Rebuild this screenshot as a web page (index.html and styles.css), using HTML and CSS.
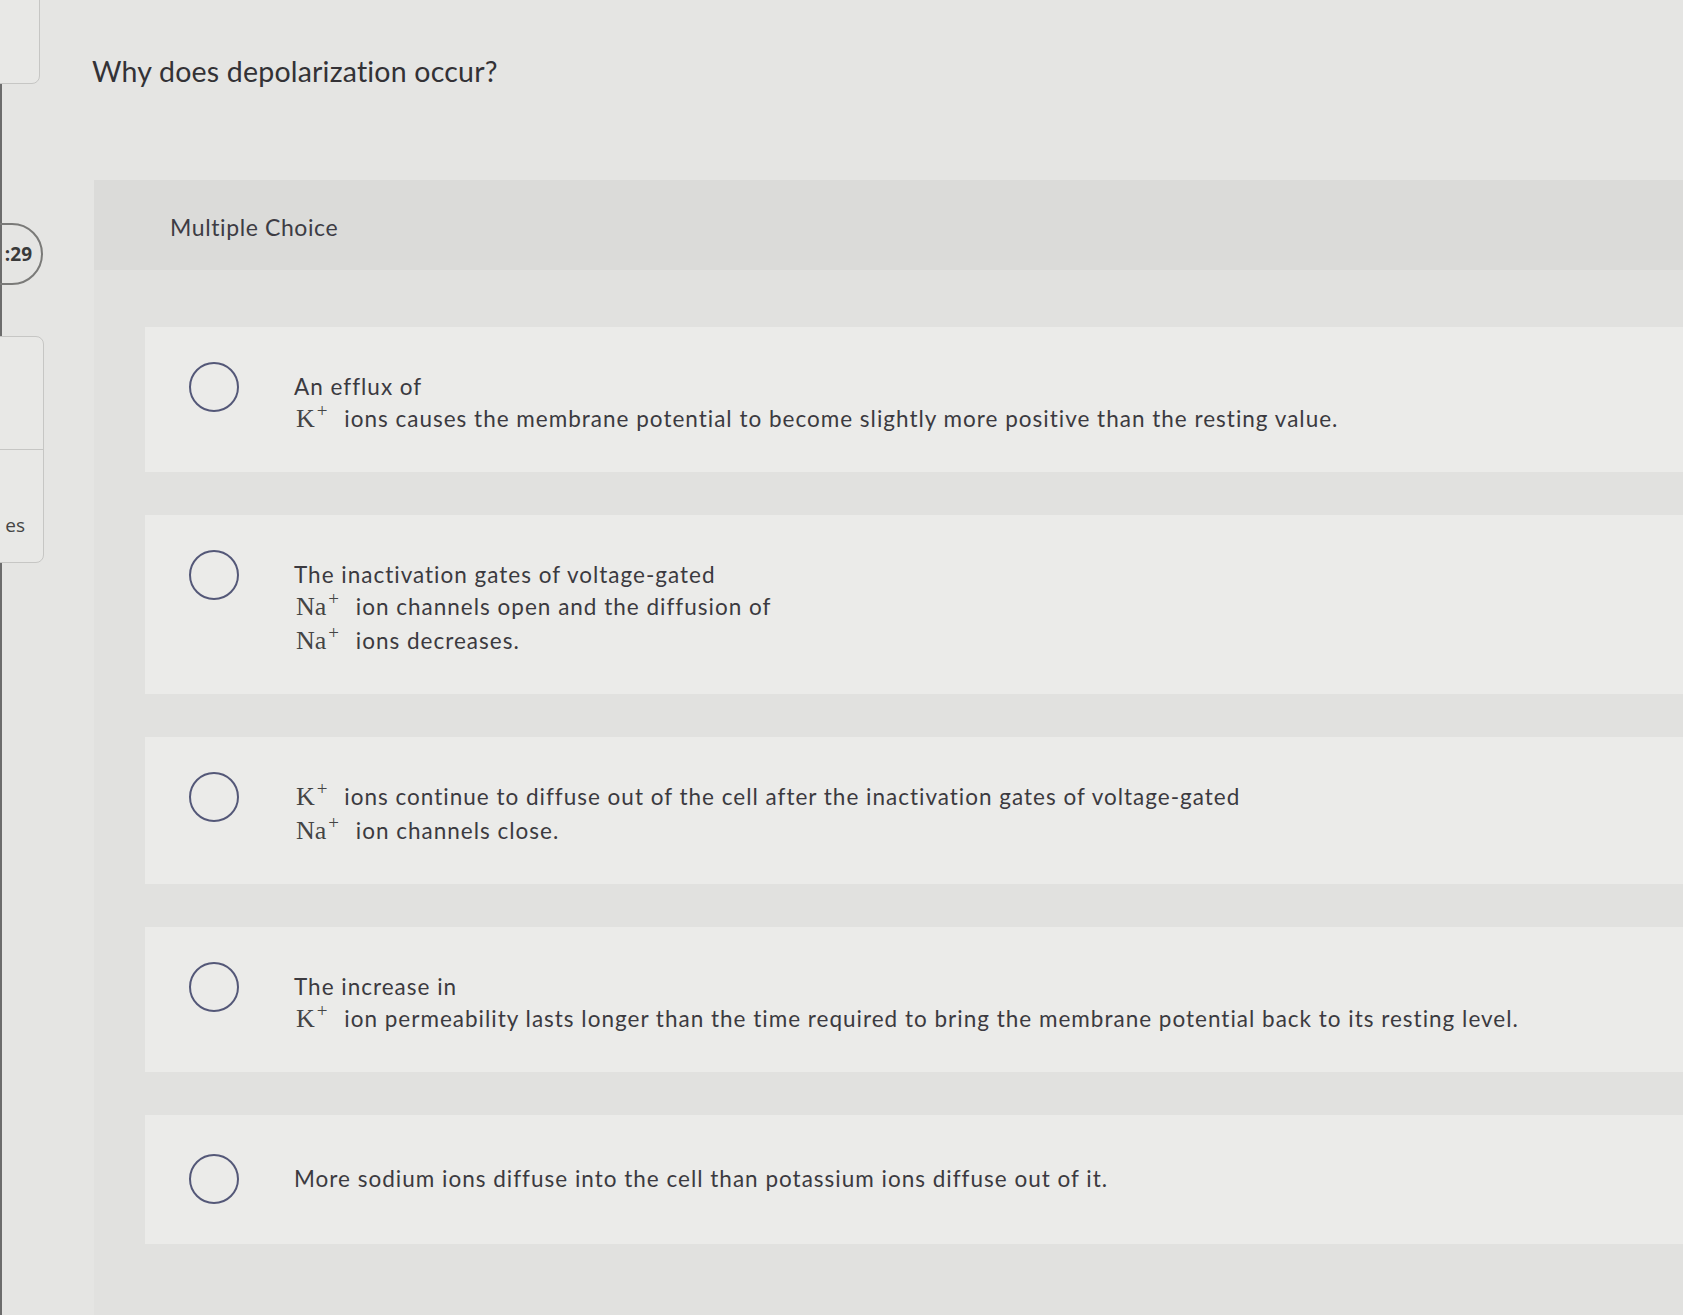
FILE: index.html
```html
<!DOCTYPE html>
<html lang="en">
<head>
<meta charset="utf-8">
<title>Why does depolarization occur?</title>
<link rel="stylesheet" href="styles.css">
</head>
<body>
<div class="page">
  <aside class="sidebar">
    <div class="side-box side-top"></div>
    <div class="timer">:29</div>
    <div class="side-box side-list">
      <div class="side-cell"></div>
      <div class="side-cell side-cell-last">es</div>
    </div>
  </aside>
  <main class="main">
    <h1 class="question">Why does depolarization occur?</h1>
    <section class="panel">
      <div class="panel-head">Multiple Choice</div>
      <div class="choices">
        <div class="choice">
          <span class="radio"></span>
          <div class="choice-text">An efflux of<br><span class="math">K<sup>+</sup></span> ions causes the membrane potential to become slightly more positive than the resting value.</div>
        </div>
        <div class="choice">
          <span class="radio"></span>
          <div class="choice-text">The inactivation gates of voltage-gated<br><span class="math">Na<sup>+</sup></span> ion channels open and the diffusion of<br><span class="math">Na<sup>+</sup></span> ions decreases.</div>
        </div>
        <div class="choice">
          <span class="radio"></span>
          <div class="choice-text"><span class="math">K<sup>+</sup></span> ions continue to diffuse out of the cell after the inactivation gates of voltage-gated<br><span class="math">Na<sup>+</sup></span> ion channels close.</div>
        </div>
        <div class="choice">
          <span class="radio"></span>
          <div class="choice-text">The increase in<br><span class="math">K<sup>+</sup></span> ion permeability lasts longer than the time required to bring the membrane potential back to its resting level.</div>
        </div>
        <div class="choice choice-single">
          <span class="radio"></span>
          <div class="choice-text">More sodium ions diffuse into the cell than potassium ions diffuse out of it.</div>
        </div>
      </div>
    </section>
  </main>
</div>
</body>
</html>
```

FILE: styles.css
```css
* {
  box-sizing: border-box;
}

html, body {
  margin: 0;
  padding: 0;
  height: 100%;
}

body {
  background: #e5e5e3;
  font-family: "Lato", "Open Sans", "Liberation Sans", sans-serif;
  color: #3b3a40;
  overflow: hidden;
}

.page {
  display: grid;
  grid-template-columns: 90px 1fr;
  min-height: 1315px;
  border-left: 2px solid #6c6c6c;
}

/* ---------- sidebar (cut off at left edge) ---------- */
.sidebar {
  display: flex;
  flex-direction: column;
  align-items: flex-start;
}

.side-box {
  border: 1px solid #c6c6c4;
  border-radius: 8px;
  background: #e8e8e6;
}

.side-top {
  width: 60px;
  height: 96px;
  margin-top: -12px;
  margin-left: -22px;
}

.timer {
  margin-top: 139px;
  margin-left: -40px;
  width: 81px;
  height: 62px;
  border: 2px solid #7a7a78;
  border-radius: 31px;
  display: flex;
  align-items: center;
  justify-content: flex-end;
  padding-right: 9px;
  font-family: "Open Sans", "Lato", sans-serif;
  font-weight: 700;
  font-size: 19px;
  color: #3a3a3a;
}

.side-list {
  margin-top: 51px;
  margin-left: -20px;
  width: 62px;
  height: 227px;
  display: flex;
  flex-direction: column;
  overflow: hidden;
}

.side-cell {
  height: 113px;
  border-bottom: 1px solid #c6c6c4;
}

.side-cell-last {
  flex: 1;
  border-bottom: none;
  display: flex;
  align-items: flex-end;
  justify-content: flex-end;
  padding: 0 18px 24px 0;
  font-family: "Open Sans", "Lato", sans-serif;
  font-size: 19px;
  color: #444;
}

/* ---------- main ---------- */
.main {
  display: flex;
  flex-direction: column;
}

.question {
  margin: 54px 0 0 0;
  font-size: 28.5px;
  line-height: 34px;
  font-weight: 400;
  color: #333236;
  letter-spacing: 0.2px;
}

.panel {
  margin-top: 92px;
  margin-left: 2px;
  flex: 1;
  background: #e1e1df;
}

.panel-head {
  height: 90px;
  background: #dbdbd9;
  display: flex;
  align-items: center;
  padding-left: 76px;
  padding-top: 4px;
  font-size: 23px;
  letter-spacing: 0.6px;
  color: #3d3c44;
}

.choices {
  display: flex;
  flex-direction: column;
  gap: 43px;
  padding: 57px 0 0 51px;
}

.choice {
  display: flex;
  align-items: flex-start;
  background: #ebebe9;
  padding: 44px 0 35px 44px;
  min-height: 129px;
}

.choice-single {
  padding-top: 48px;
}

.radio {
  flex: 0 0 auto;
  width: 50px;
  height: 50px;
  margin-top: -9px;
  border: 2px solid #545878;
  border-radius: 50%;
}

.choice-text {
  margin-left: 55px;
  font-size: 22.5px;
  line-height: 32px;
  letter-spacing: 1px;
  color: #3b3a40;
}

.math {
  font-family: "Liberation Serif", "DejaVu Serif", serif;
  font-size: 26px;
  letter-spacing: 0;
  color: #444;
  margin-right: 10px;
  margin-left: 2px;
}

.math sup {
  font-size: 19px;
  font-weight: 300;
  vertical-align: 0;
  position: relative;
  top: -10px;
  margin-left: 2px;
}
```
